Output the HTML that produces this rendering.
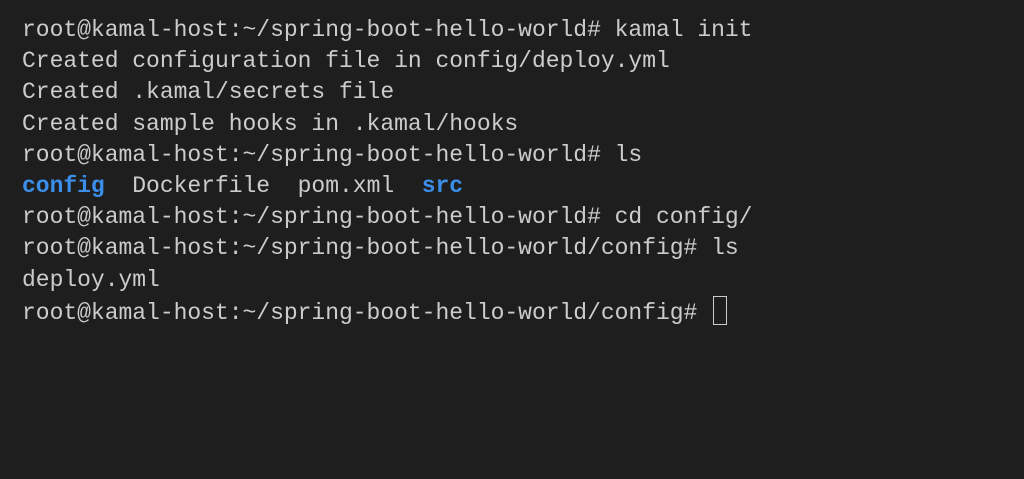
<!DOCTYPE html>
<html><head><style>
html,body{margin:0;padding:0;background:#1e1e1e;width:1024px;height:479px;overflow:hidden}
pre{margin:0;position:absolute;left:22px;top:15px;font-family:"Liberation Mono",monospace;font-size:23px;line-height:31.2px;color:#cccccc;letter-spacing:-0.02px}
b{color:#3b8eea;font-weight:bold}
.cur{display:inline-block;width:12px;height:27px;border:1.5px solid #cccccc;vertical-align:-6px;margin-left:2px}
</style></head><body>
<pre>root@kamal-host:~/spring-boot-hello-world# kamal init
Created configuration file in config/deploy.yml
Created .kamal/secrets file
Created sample hooks in .kamal/hooks
root@kamal-host:~/spring-boot-hello-world# ls
<b>config</b>  Dockerfile  pom.xml  <b>src</b>
root@kamal-host:~/spring-boot-hello-world# cd config/
root@kamal-host:~/spring-boot-hello-world/config# ls
deploy.yml
root@kamal-host:~/spring-boot-hello-world/config# <span class="cur"></span></pre>
</body></html>
